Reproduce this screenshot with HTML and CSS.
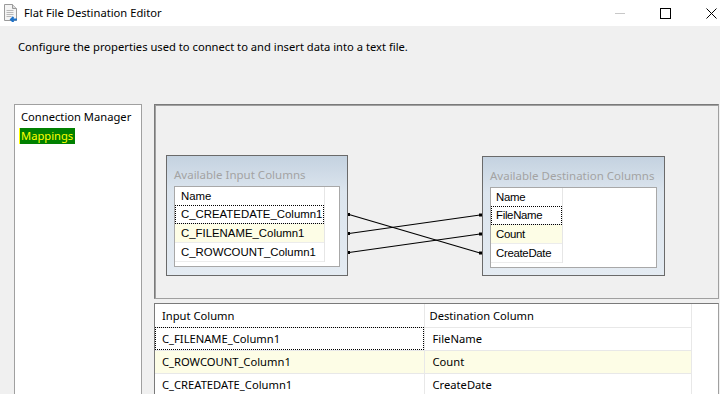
FILE: index.html
```html
<!DOCTYPE html>
<html>

<head>
    <meta charset="utf-8">
    <title>Flat File Destination Editor</title>
    <link rel="stylesheet" href="styles.css">
</head>

<body>
    <div class="titlebar">
        <svg class="app-icon" width="16" height="18" viewBox="0 0 16 18">
            <path d="M1.5 0.5h8l4 4v12h-12z" fill="#f4f4f4" stroke="#9a9a9a" />
            <path d="M9.5 0.5v4h4" fill="#dcdcdc" stroke="#9a9a9a" />
            <path d="M3.5 6.5h7M3.5 8.5h7M3.5 10.5h7M3.5 12.5h5" stroke="#b8b8b8" />
            <path d="M8 15.5h6M10.5 13l-2.5 2.5 2.5 2.5" fill="none" stroke="#1e72c8" stroke-width="2" />
        </svg>
        <span class="title">Flat File Destination Editor</span>
        <div class="controls">
            <span class="ctl ctl-min"></span>
            <span class="ctl ctl-max"></span>
            <svg class="ctl-close" width="11" height="11" viewBox="0 0 11 11">
                <path d="M0.5 0.5l10 10M10.5 0.5l-10 10" stroke="#000" stroke-width="1" />
            </svg>
        </div>
    </div>

    <p class="desc">Configure the properties used to connect to and insert data into a text file.</p>

    <div class="main">
        <ul class="nav">
            <li>Connection Manager</li>
            <li class="active"><span>Mappings</span></li>
        </ul>

        <div class="content">
            <div class="canvas">
                <svg class="links" width="563" height="193" viewBox="155 105 563 193">
                    <g stroke="#000" stroke-width="1.2" fill="none">
                        <path d="M349 214.5L480 253" />
                        <path d="M349 233.5L480 215" />
                        <path d="M349 252.5L480 234" />
                    </g>
                    <g fill="#000">
                        <rect x="347" y="213" width="3" height="3" />
                        <rect x="347" y="232" width="3" height="3" />
                        <rect x="347" y="251" width="3" height="3" />
                        <rect x="479" y="213.5" width="3" height="3" />
                        <rect x="479" y="232.5" width="3" height="3" />
                        <rect x="479" y="251.5" width="3" height="3" />
                    </g>
                </svg>

                <div class="node node-input">
                    <div class="node-title">Available Input Columns</div>
                    <div class="node-list">
                        <div class="col col-input">
                            <div class="cell head">Name</div>
                            <div class="cell focus">C_CREATEDATE_Column1</div>
                            <div class="cell hl">C_FILENAME_Column1</div>
                            <div class="cell">C_ROWCOUNT_Column1</div>
                        </div>
                    </div>
                </div>

                <div class="node node-dest">
                    <div class="node-title">Available Destination Columns</div>
                    <div class="node-list">
                        <div class="col col-dest">
                            <div class="cell head">Name</div>
                            <div class="cell focus">FileName</div>
                            <div class="cell hl">Count</div>
                            <div class="cell">CreateDate</div>
                        </div>
                    </div>
                </div>
            </div>

            <div class="grid">
                <table>
                    <tr class="grid-head">
                        <th>Input Column</th>
                        <th>Destination Column</th>
                    </tr>
                    <tr>
                        <td class="focus">C_FILENAME_Column1</td>
                        <td>FileName</td>
                    </tr>
                    <tr class="hl">
                        <td>C_ROWCOUNT_Column1</td>
                        <td>Count</td>
                    </tr>
                    <tr>
                        <td>C_CREATEDATE_Column1</td>
                        <td>CreateDate</td>
                    </tr>
                </table>
            </div>
        </div>
    </div>
</body>

</html>
```

FILE: styles.css
```css
* {
    box-sizing: border-box;
    margin: 0;
    padding: 0;
}

body {
    background-color: #f0f0f0;
    color: #000;
    font-family: "Noto Sans", sans-serif;
    font-size: 11.2px;
    overflow: hidden;
}

/* title bar */

.titlebar {
    align-items: center;
    background-color: #fff;
    display: flex;
    height: 26px;
    padding-left: 3px;
}

.app-icon {
    margin-right: 5px;
}

.title {
    line-height: 16px;
}

.controls {
    align-items: center;
    display: flex;
    margin-left: auto;
}

.ctl {
    display: block;
}

.ctl-min {
    border-top: 1px solid #c8c8c8;
    height: 1px;
    margin-right: 35px;
    width: 10px;
}

.ctl-max {
    border: 1px solid #000;
    height: 11px;
    margin-right: 35px;
    width: 11px;
}

.ctl-close {
    margin-right: 3px;
}

.desc {
    line-height: 16px;
    padding: 13px 0 0 18px;
}

/* body */

.main {
    display: flex;
    margin-top: 49px;
    padding-left: 14px;
}

.nav {
    background-color: #fff;
    border: 1px solid #a0a0a0;
    height: 300px;
    list-style: none;
    padding: 4px 0 0 4px;
    width: 128px;
}

.nav li {
    line-height: 16px;
    padding-left: 2px;
}

.nav li.active {
    margin-top: 3px;
    padding-left: 0;
}

.nav li.active span {
    background-color: #008000;
    border-left: 1px solid #ffff00;
    color: #ffff00;
    display: inline-block;
    line-height: 16px;
    padding: 0 2px 0 1px;
}

.content {
    margin-left: 12px;
    width: 565px;
}

/* mapping canvas */

.canvas {
    background-color: #f0f0f0;
    border: 1px solid #a0a0a0;
    border-left-color: #7a7a7a;
    border-top-color: #7a7a7a;
    box-shadow: inset 1px 1px 0 #a0a0a0;
    height: 195px;
    margin-bottom: 4px;
    position: relative;
}

.links {
    left: 0;
    position: absolute;
    top: 0;
}

.node {
    background: linear-gradient(#c4d2e0, #dce5ee 30%, #e4ebf2);
    border: 1px solid #6a6a6a;
    padding: 0 7px 9px 7px;
    position: absolute;
}

.node-input {
    height: 121px;
    left: 11px;
    top: 50px;
    width: 182px;
}

.node-dest {
    height: 120px;
    left: 327px;
    top: 51px;
    width: 183px;
}

.node-title {
    color: #a3a3a3;
    font-size: 11.5px;
    height: 30px;
    line-height: 16px;
    padding-top: 11px;
    white-space: nowrap;
}

.node-list {
    background-color: #fff;
    border: 1px solid #a8a8a8;
    font-family: "Liberation Sans", Arial, sans-serif;
    font-size: 11.4px;
    height: 81px;
}

.col {
    border-right: 1px solid #e6e6e6;
}

.col-input {
    width: 150px;
}

.col-dest {
    width: 72px;
}

.cell {
    border-bottom: 1px solid #ececec;
    height: 19px;
    line-height: 18px;
    padding-left: 6px;
}

.cell.head {
    border-bottom: none;
    height: 18px;
    line-height: 18px;
}

.cell.focus {
    outline: 1px dotted #000;
    outline-offset: -1px;
}

.cell.hl {
    background-color: #fdfde6;
}

.col-dest .cell {
    letter-spacing: -0.3px;
    padding-left: 5px;
}

/* grid */

.grid {
    background-color: #fff;
    border: 1px solid #a0a0a0;
    border-left-color: #7a7a7a;
    border-top-color: #7a7a7a;
    height: 100px;
}

.grid table {
    border-collapse: collapse;
    width: 537px;
}

.grid th,
.grid td {
    border-bottom: 1px solid #e8e8e8;
    border-right: 1px solid #e8e8e8;
    font-weight: normal;
    height: 23px;
    padding-left: 7px;
    text-align: left;
}

.grid th:first-child,
.grid td:first-child {
    width: 269px;
}

.grid th + th {
    padding-left: 5px;
}

.grid td + td {
    padding-left: 8px;
}

.grid td.focus {
    outline: 1px dotted #000;
    outline-offset: -1px;
}

.grid tr.hl td {
    background-color: #fdfde6;
}
```
